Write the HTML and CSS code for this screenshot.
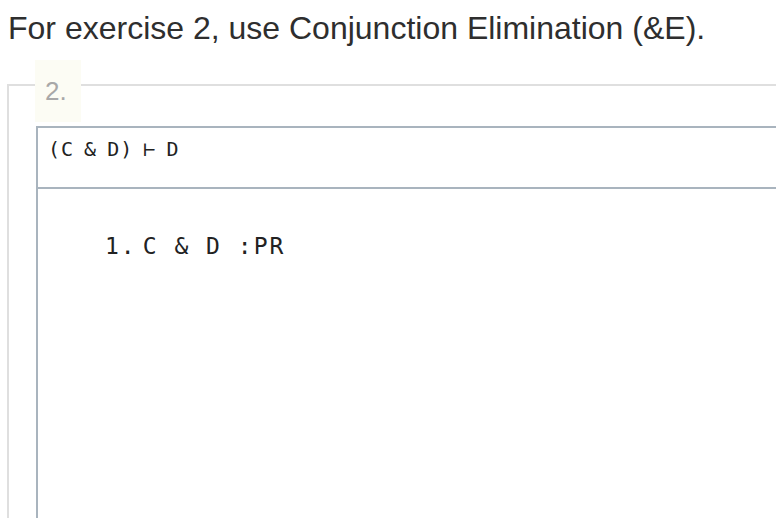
FILE: index.html
```html
<!DOCTYPE html>
<html lang="en">
<head>
<meta charset="utf-8">
<title>Exercise 2</title>
<link rel="stylesheet" href="styles.css">
</head>
<body>
<p class="intro">For exercise 2, use Conjunction Elimination (&amp;E).</p>
<section class="exercise">
  <div class="label">2.</div>
  <div class="problem">
    <div class="sequent">(C &amp; D) ⊢ D</div>
    <div class="proof">
      <div class="line"><span class="num">1.</span><span class="wff">C &amp; D</span><span class="just"> :PR</span></div>
    </div>
  </div>
</section>
</body>
</html>
```

FILE: styles.css
```css
html, body {
  margin: 0;
  padding: 0;
  background: #ffffff;
  overflow: hidden;
  height: 100%;
}

.intro {
  margin: 10px 0 0 8px;
  font-family: "Liberation Sans", Arial, sans-serif;
  font-size: 32px;
  line-height: 37px;
  color: #2e2e2e;
}

.exercise {
  margin: 37px -40px 0 7px;
  border-top: 2px solid #dfdfdf;
  border-left: 2px solid #dfdfdf;
  padding-left: 26px;
}

.label {
  display: inline-block;
  margin-top: -26px;
  height: 62px;
  padding: 0 14px 0 10px;
  background: #fcfcf4;
  font-family: "Liberation Sans", Arial, sans-serif;
  font-size: 26px;
  line-height: 62px;
  color: #a8a8a8;
  vertical-align: top;
}

.problem {
  margin: 4px 0 0 1px;
  border: 2px solid #a9b4be;
  min-height: 600px;
  font-family: "DejaVu Sans Mono", Menlo, monospace;
  color: #222222;
}

.sequent {
  padding: 9px 0 26px 10px;
  border-bottom: 2px solid #a9b4be;
  font-size: 20px;
  line-height: 24px;
  letter-spacing: 1px;
  word-spacing: -3px;
}

.proof {
  padding: 43px 0 0 67px;
  font-size: 23px;
  line-height: 28px;
  letter-spacing: 2px;
}

.line {
  display: flex;
  align-items: baseline;
  white-space: pre;
}

.num {
  margin-right: 6px;
}
```
